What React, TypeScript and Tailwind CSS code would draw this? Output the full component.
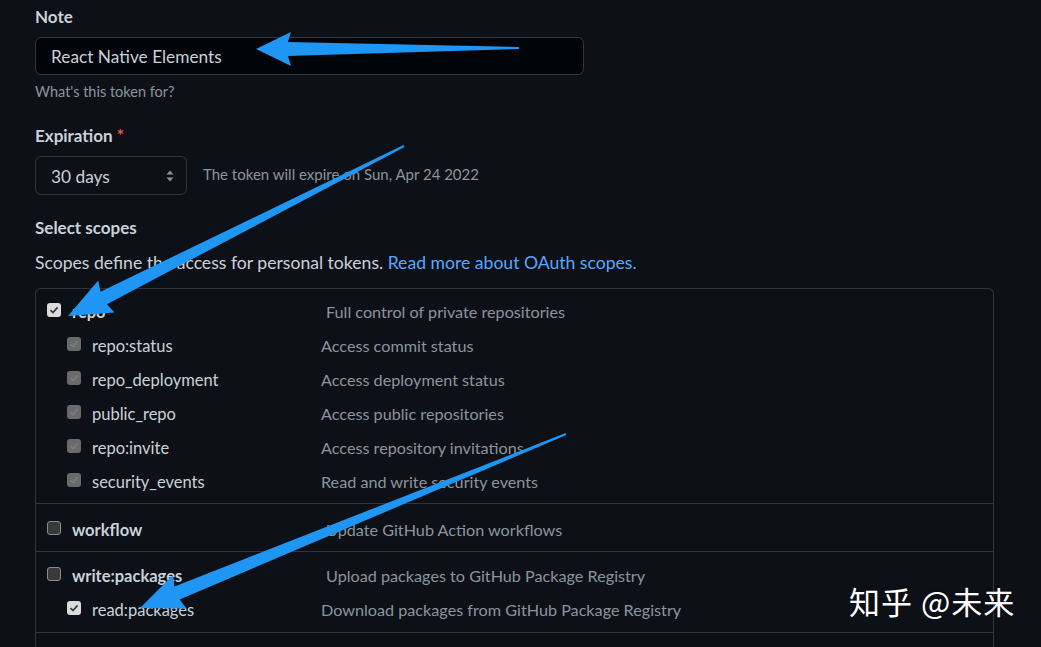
import React from 'react'

type Scope = {
  name: string
  desc: string
  state: 'checked' | 'unchecked' | 'disabled'
  sub?: boolean
}

const groups: { rows: Scope[]; pad: string }[] = [
  {
    pad: 'pt-[6px] pb-[4px]',
    rows: [
      { name: 'repo', desc: 'Full control of private repositories', state: 'checked' },
      { name: 'repo:status', desc: 'Access commit status', state: 'disabled', sub: true },
      { name: 'repo_deployment', desc: 'Access deployment status', state: 'disabled', sub: true },
      { name: 'public_repo', desc: 'Access public repositories', state: 'disabled', sub: true },
      { name: 'repo:invite', desc: 'Access repository invitations', state: 'disabled', sub: true },
      { name: 'security_events', desc: 'Read and write security events', state: 'disabled', sub: true },
    ],
  },
  {
    pad: 'pt-[9px] pb-[4px]',
    rows: [{ name: 'workflow', desc: 'Update GitHub Action workflows', state: 'unchecked' }],
  },
  {
    pad: 'pt-[7px] pb-[5px]',
    rows: [
      { name: 'write:packages', desc: 'Upload packages to GitHub Package Registry', state: 'unchecked' },
      { name: 'read:packages', desc: 'Download packages from GitHub Package Registry', state: 'checked', sub: true },
    ],
  },
]

function Check({ state }: { state: Scope['state'] }) {
  if (state === 'unchecked') {
    return <span className="w-[14px] h-[14px] rounded-[3px] bg-[#3a3a3c] border border-[#8a8a8a] shrink-0" />
  }
  const on = state === 'checked'
  return (
    <span
      className={
        'w-[14px] h-[14px] rounded-[3px] shrink-0 flex items-center justify-center ' +
        (on ? 'bg-[#dcdcdc]' : 'bg-[#6a6a6c]')
      }
    >
      <svg width="10" height="10" viewBox="0 0 10 10">
        <path
          d="M1.5 5.2 L4 7.6 L8.6 2.4"
          fill="none"
          stroke={on ? '#3a3a3a' : '#7c7c7e'}
          strokeWidth="1.7"
        />
      </svg>
    </span>
  )
}

function ScopeRow({ s }: { s: Scope }) {
  return (
    <div className={'flex items-center h-[34px] ' + (s.sub ? 'pl-[31px]' : 'pl-[11px]')}>
      <span className="flex items-center -mt-[4px]">
        <Check state={s.state} />
      </span>
      <span
        className={
          'ml-[11px] text-[16.5px] text-[#c9d1d9] ' + (s.sub ? 'w-[229px]' : 'w-[254px] font-bold')
        }
      >
        {s.name}
      </span>
      <span className="text-[16.2px] text-[#8b949e]">{s.desc}</span>
    </div>
  )
}

function arrow(tx: number, ty: number, hx: number, hy: number, headLen: number, headHalf: number, neck: number, tail: number) {
  const dx = hx - tx
  const dy = hy - ty
  const len = Math.hypot(dx, dy)
  const ux = dx / len
  const uy = dy / len
  const px = -uy
  const py = ux
  const bx = hx - ux * headLen
  const by = hy - uy * headLen
  const pts = [
    [tx + px * tail, ty + py * tail],
    [bx + px * neck, by + py * neck],
    [bx + px * headHalf - ux * 3, by + py * headHalf - uy * 3],
    [hx, hy],
    [bx - px * headHalf - ux * 3, by - py * headHalf - uy * 3],
    [bx - px * neck, by - py * neck],
    [tx - px * tail, ty - py * tail],
  ]
  return pts.map((p) => p[0].toFixed(1) + ',' + p[1].toFixed(1)).join(' ')
}

export default function App() {
  return (
    <div
      className="relative w-[1041px] h-[647px] overflow-hidden bg-[#0d1117] text-[#c9d1d9]"
      style={{ fontFamily: 'Lato, "Noto Sans", sans-serif' }}
    >
      <div className="pl-[35px] pt-[5px] w-[994px]">
        <div className="text-[17px] font-bold leading-[24px]">Note</div>
        <div className="mt-[8px] w-[549px] h-[38px] rounded-[6px] border border-[#30363d] bg-[#010409] flex items-center pl-[15px] pt-[2px] text-[17.3px]">
          React Native Elements
        </div>
        <div className="mt-[7px] text-[14.5px] leading-[20px] text-[#8b949e]">What's this token for?</div>

        <div className="mt-[22px] text-[17px] font-bold leading-[24px]">
          Expiration <span className="text-[#f85149]">*</span>
        </div>
        <div className="mt-[8px] flex items-center">
          <div className="w-[152px] h-[39px] rounded-[6px] border border-[#30363d] bg-[#0d1117] flex items-center justify-between pl-[15px] pr-[11px] pt-[2px] text-[17.3px]">
            <span>30 days</span>
            <svg width="10" height="14" viewBox="0 0 10 14" className="-mt-[2px]">
              <path d="M5 1.5 L8.5 5.5 H1.5 Z" fill="#8b949e" />
              <path d="M5 12.5 L8.5 8.5 H1.5 Z" fill="#8b949e" />
            </svg>
          </div>
          <span className="ml-[16px] text-[15px] text-[#8b949e] -mt-[2px]">The token will expire on Sun, Apr 24 2022</span>
        </div>

        <div className="mt-[21px] text-[17px] font-bold leading-[24px]">Select scopes</div>
        <div className="mt-[11px] text-[17.6px] leading-[24px]">
          Scopes define the access for personal tokens.{' '}
          <span className="text-[#58a6ff]">Read more about OAuth scopes.</span>
        </div>

        <div className="mt-[13px] rounded-t-[6px] border border-[#30363d] border-b-0">
          {groups.map((g, i) => (
            <div key={i} className={g.pad + ' border-b border-[#30363d]'}>
              {g.rows.map((s) => (
                <ScopeRow key={s.name} s={s} />
              ))}
            </div>
          ))}
          <div className="h-[40px]" />
        </div>
      </div>

      <svg className="absolute inset-0 pointer-events-none" width="1041" height="647">
        <polygon points={arrow(519, 48, 256, 49, 32, 17, 7, 1)} fill="#1f95f4" />
        <polygon points={arrow(404, 146, 68, 316, 40, 18, 7, 1)} fill="#1f95f4" />
        <polygon points={arrow(566, 434, 140, 608, 40, 18, 7, 1)} fill="#1f95f4" />
      </svg>

      <div
        className="absolute left-[849px] top-[582px] text-[31px] leading-[38px] text-white tracking-[1px]"
        style={{ fontFamily: '"Noto Sans CJK SC", sans-serif', textShadow: '0 0 2px rgba(0,0,0,0.6)' }}
      >
        知乎 @未来
      </div>
    </div>
  )
}
